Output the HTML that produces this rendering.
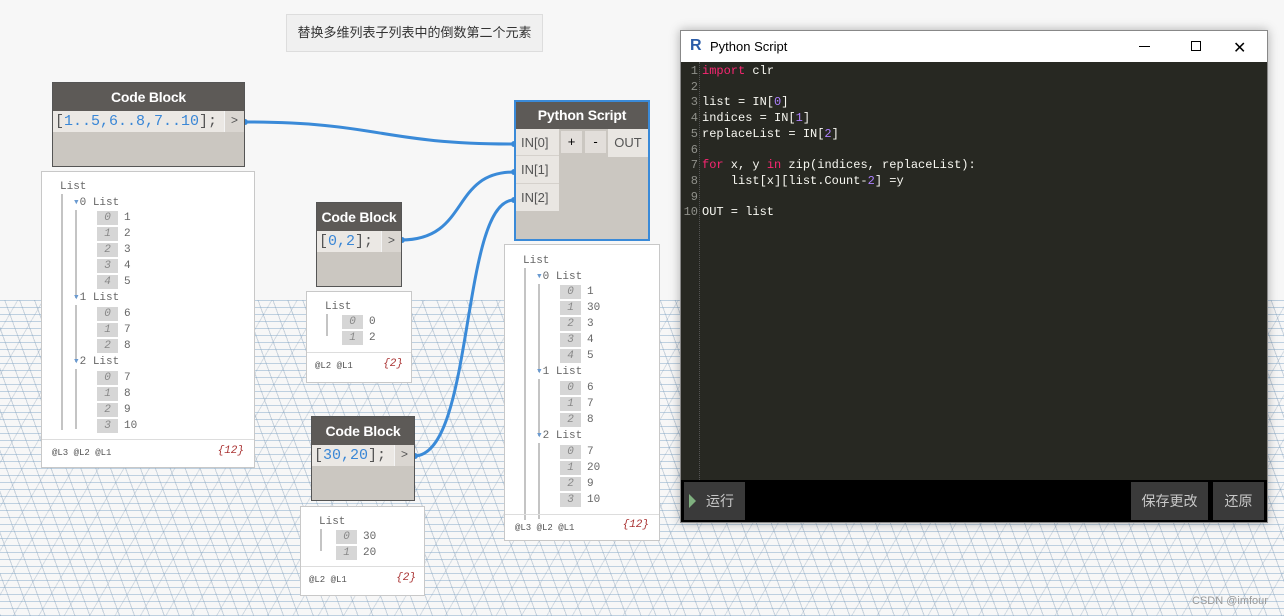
<!DOCTYPE html>
<html><head><meta charset="utf-8"><style>
*{margin:0;padding:0;box-sizing:border-box}
body{width:1284px;height:616px;overflow:hidden;position:relative;background:#f7f7f7;font-family:"Liberation Sans","Noto Sans CJK SC",sans-serif}
.abs{position:absolute}
.grid{position:absolute;left:0;top:300px;width:1284px;height:316px;
background:repeating-linear-gradient(0deg,rgba(120,160,195,.45) 0 1px,transparent 1px 7px),repeating-linear-gradient(70deg,rgba(110,140,170,.35) 0 1px,transparent 1px 14px),repeating-linear-gradient(-60deg,rgba(110,140,170,.25) 0 1px,transparent 1px 22px);}
.node{position:absolute;background:#cbc7c1;border:1px solid #555}
.hdr{background:#5d5a57;color:#fff;font-size:14px;font-weight:bold;text-align:center;height:28px;line-height:28px;letter-spacing:-0.2px}
.cb{background:#ebe8e4;font-family:"Liberation Mono",monospace;font-size:15px;color:#3a87d6;height:21px;line-height:21px;padding-left:2px;position:relative}
.cb .br{color:#555}
.arr{position:absolute;right:0;top:0;width:20px;height:21px;background:#dad6d1;color:#555;font-size:12px;text-align:center;border-left:1px solid #f4f4f4}
.watch{position:absolute;background:#fff;border:1px solid #c8c8c8;font-family:"Liberation Mono",monospace;font-size:11px;color:#666}
.watch .t{position:absolute;white-space:nowrap;line-height:14px}
.ix{display:inline-block;background:#d6d6d6;color:#888;font-style:italic;width:21px;text-align:center;margin-right:6px}
.foot{position:absolute;left:0;right:0;bottom:0;border-top:1px solid #ddd;font-size:9px;color:#555}
.foot span{position:absolute;top:8px}
.foot i{color:#a33;font-size:11px}
.vl{position:absolute;width:2px;background:#c4c4c4}
.code{position:absolute;font-family:"Liberation Mono",monospace;font-size:12px;color:#f8f8f2;white-space:pre;line-height:15.7px}
.kw{color:#f92672}.nm{color:#ae81ff}
.ln{position:absolute;font-family:"Liberation Mono",monospace;font-size:12px;color:#8f908a;line-height:15.7px;text-align:right;width:16px;white-space:pre}
.btn{position:absolute;background:#3a3a3a;color:#c8c8c8;font-size:14px;text-align:center;line-height:38px;height:38px}
</style></head><body>
<div class="grid"></div>

<div class="abs" style="left:286px;top:14px;width:257px;height:38px;background:#f0f0f0;border:1px solid #ddd;font-size:13px;line-height:36px;text-align:center;color:#333">替换多维列表子列表中的倒数第二个元素</div>

<svg class="abs" style="left:0;top:0" width="700" height="616">
<g fill="none" stroke="#3a8ad8" stroke-width="3">
<path d="M244 122 C380 122 380 144 514 144"/>
<path d="M401 240 C470 240 450 172 514 172"/>
<path d="M414 456 C475 456 460 200 514 200"/>
</g>
<g fill="#3a8ad8"><circle cx="245" cy="122" r="3"/><circle cx="402" cy="240" r="3"/><circle cx="415" cy="456" r="3"/><circle cx="514" cy="144" r="3"/><circle cx="514" cy="172" r="3"/><circle cx="514" cy="200" r="3"/></g>
</svg>

<div class="node" style="left:52px;top:82px;width:193px;height:85px">
<div class="hdr">Code Block</div>
<div class="cb"><span class="br">[</span>1..5,6..8,7..10<span class="br">];</span><div class="arr">&gt;</div></div>
</div>
<div class="watch" style="left:41px;top:171px;width:214px;height:297px">
<div class="t" style="left:18px;top:8px">List</div>
<div class="vl" style="left:19px;top:22px;height:236px"></div>
<div class="t" style="left:31px;top:24px"><span style="color:#6a9ad0">▾</span>0 List</div>
<div class="vl" style="left:33px;top:38px;height:88px"></div>
<div class="t" style="left:55px;top:39px"><span class="ix">0</span>1</div>
<div class="t" style="left:55px;top:55px"><span class="ix">1</span>2</div>
<div class="t" style="left:55px;top:71px"><span class="ix">2</span>3</div>
<div class="t" style="left:55px;top:87px"><span class="ix">3</span>4</div>
<div class="t" style="left:55px;top:103px"><span class="ix">4</span>5</div>
<div class="t" style="left:31px;top:119px"><span style="color:#6a9ad0">▾</span>1 List</div>
<div class="vl" style="left:33px;top:133px;height:57px"></div>
<div class="t" style="left:55px;top:135px"><span class="ix">0</span>6</div>
<div class="t" style="left:55px;top:151px"><span class="ix">1</span>7</div>
<div class="t" style="left:55px;top:167px"><span class="ix">2</span>8</div>
<div class="t" style="left:31px;top:183px"><span style="color:#6a9ad0">▾</span>2 List</div>
<div class="vl" style="left:33px;top:197px;height:60px"></div>
<div class="t" style="left:55px;top:199px"><span class="ix">0</span>7</div>
<div class="t" style="left:55px;top:215px"><span class="ix">1</span>8</div>
<div class="t" style="left:55px;top:231px"><span class="ix">2</span>9</div>
<div class="t" style="left:55px;top:247px"><span class="ix">3</span>10</div>
<div class="foot" style="height:28px"><span style="left:10px">@L3 @L2 @L1</span><span style="right:10px;top:5px"><i>{12}</i></span></div>
</div>

<div class="node" style="left:316px;top:202px;width:86px;height:85px">
<div class="hdr">Code Block</div>
<div class="cb"><span class="br">[</span>0,2<span class="br">];</span><div class="arr">&gt;</div></div>
</div>
<div class="watch" style="left:306px;top:291px;width:106px;height:92px">
<div class="t" style="left:18px;top:8px">List</div>
<div class="vl" style="left:19px;top:22px;height:22px"></div>
<div class="t" style="left:35px;top:23px"><span class="ix">0</span>0</div>
<div class="t" style="left:35px;top:39px"><span class="ix">1</span>2</div>
<div class="foot" style="height:30px"><span style="left:8px">@L2 @L1</span><span style="right:8px;top:5px"><i>{2}</i></span></div>
</div>

<div class="node" style="left:311px;top:416px;width:104px;height:85px">
<div class="hdr">Code Block</div>
<div class="cb"><span class="br">[</span>30,20<span class="br">];</span><div class="arr">&gt;</div></div>
</div>
<div class="watch" style="left:300px;top:506px;width:125px;height:90px">
<div class="t" style="left:18px;top:8px">List</div>
<div class="vl" style="left:19px;top:22px;height:22px"></div>
<div class="t" style="left:35px;top:23px"><span class="ix">0</span>30</div>
<div class="t" style="left:35px;top:39px"><span class="ix">1</span>20</div>
<div class="foot" style="height:29px"><span style="left:8px">@L2 @L1</span><span style="right:8px;top:5px"><i>{2}</i></span></div>
</div>

<div class="abs" style="left:514px;top:100px;width:136px;height:141px;background:#cbc7c1;border:2px solid #3a8ad8">
<div class="hdr" style="height:27px;line-height:27px">Python Script</div>
<div class="abs" style="left:0;top:27px;width:43px;height:83px;font-size:13px;color:#555">
<div style="background:#e9e6e2;height:27px;line-height:27px;padding-left:5px;border-bottom:1px solid #d5d1cc">IN[0]</div>
<div style="background:#e9e6e2;height:28px;line-height:28px;padding-left:5px;border-bottom:1px solid #d5d1cc">IN[1]</div>
<div style="background:#e9e6e2;height:27px;line-height:27px;padding-left:5px">IN[2]</div>
</div>
<div class="abs" style="left:45px;top:29px;width:21px;height:22px;background:#e2deda;text-align:center;font-size:13px;line-height:22px">+</div>
<div class="abs" style="left:69px;top:29px;width:21px;height:22px;background:#e2deda;text-align:center;font-size:13px;line-height:22px">-</div>
<div class="abs" style="left:92px;top:27px;width:40px;height:28px;background:#e9e6e2;text-align:center;font-size:13px;line-height:28px;color:#555">OUT</div>
</div>
<div class="watch" style="left:504px;top:244px;width:156px;height:297px">
<div class="t" style="left:18px;top:9px">List</div>
<div class="vl" style="left:19px;top:23px;height:252px"></div>
<div class="t" style="left:31px;top:25px"><span style="color:#6a9ad0">▾</span>0 List</div>
<div class="vl" style="left:33px;top:39px;height:88px"></div>
<div class="t" style="left:55px;top:40px"><span class="ix">0</span>1</div>
<div class="t" style="left:55px;top:56px"><span class="ix">1</span>30</div>
<div class="t" style="left:55px;top:72px"><span class="ix">2</span>3</div>
<div class="t" style="left:55px;top:88px"><span class="ix">3</span>4</div>
<div class="t" style="left:55px;top:104px"><span class="ix">4</span>5</div>
<div class="t" style="left:31px;top:120px"><span style="color:#6a9ad0">▾</span>1 List</div>
<div class="vl" style="left:33px;top:134px;height:57px"></div>
<div class="t" style="left:55px;top:136px"><span class="ix">0</span>6</div>
<div class="t" style="left:55px;top:152px"><span class="ix">1</span>7</div>
<div class="t" style="left:55px;top:168px"><span class="ix">2</span>8</div>
<div class="t" style="left:31px;top:184px"><span style="color:#6a9ad0">▾</span>2 List</div>
<div class="vl" style="left:33px;top:198px;height:76px"></div>
<div class="t" style="left:55px;top:200px"><span class="ix">0</span>7</div>
<div class="t" style="left:55px;top:216px"><span class="ix">1</span>20</div>
<div class="t" style="left:55px;top:232px"><span class="ix">2</span>9</div>
<div class="t" style="left:55px;top:248px"><span class="ix">3</span>10</div>
<div class="foot" style="height:26px"><span style="left:10px">@L3 @L2 @L1</span><span style="right:10px;top:4px"><i>{12}</i></span></div>
</div>

<div class="abs" style="left:680px;top:30px;width:588px;height:493px;background:#000;border:1px solid #888;box-shadow:0 0 10px rgba(0,0,0,.3)">
<div class="abs" style="left:0;top:0;width:586px;height:31px;background:#fff">
<div class="abs" style="left:9px;top:7px;width:13px;height:16px;color:#2a5ca8;font-weight:bold;font-size:16px;line-height:16px">R</div>
<div class="abs" style="left:29px;top:8px;font-size:13px;color:#000">Python Script</div>
<div class="abs" style="left:458px;top:15px;width:11px;height:1px;background:#000"></div>
<div class="abs" style="left:510px;top:10px;width:10px;height:10px;border:1px solid #000"></div>
<div class="abs" style="left:552px;top:7px;font-size:16px;color:#000">✕</div>
</div>
<div class="abs" style="left:0;top:31px;width:586px;height:418px;background:#272822"></div>
<div class="abs" style="left:18px;top:31px;width:0;height:418px;border-left:1px dotted #555"></div>
<div class="ln" style="left:1px;top:33px">1
2
3
4
5
6
7
8
9
10</div>
<div class="code" style="left:21px;top:33px"><span class="kw">import</span> clr

list = IN[<span class="nm">0</span>]
indices = IN[<span class="nm">1</span>]
replaceList = IN[<span class="nm">2</span>]

<span class="kw">for</span> x, y <span class="kw">in</span> zip(indices, replaceList):
    list[x][list.Count-<span class="nm">2</span>] =y

OUT = list</div>
<div class="btn" style="left:3px;top:451px;width:61px;text-align:left;padding-left:22px">运行</div>
<div class="abs" style="left:8px;top:463px;width:0;height:0;border-left:7px solid #7fb07f;border-top:7px solid transparent;border-bottom:7px solid transparent"></div>
<div class="btn" style="left:450px;top:451px;width:77px">保存更改</div>
<div class="btn" style="left:532px;top:451px;width:51px">还原</div>
</div>
<div class="abs" style="left:1192px;top:595px;font-size:11px;color:#999">CSDN @imfour</div>
</body></html>
